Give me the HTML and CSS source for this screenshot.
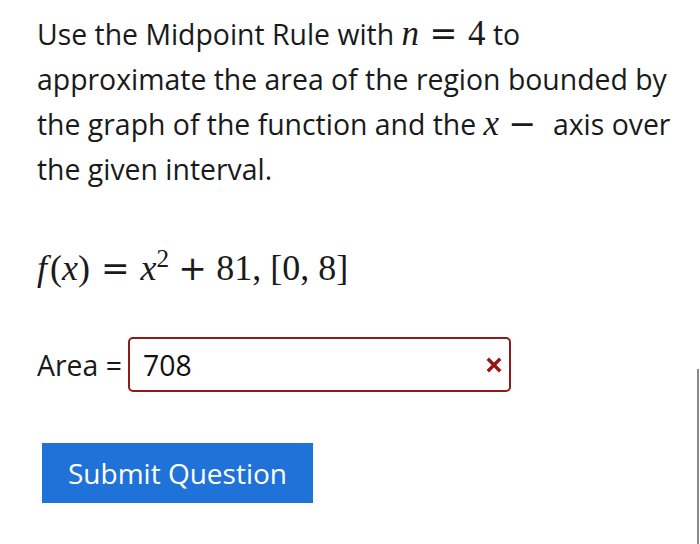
FILE: index.html
```html
<!DOCTYPE html>
<html>
<head>
<meta charset="utf-8">
<link rel="stylesheet" href="styles.css">
</head>
<body>
<div class="page">
  <p class="question">Use the Midpoint Rule with <span class="m"><i>n</i><span class="op">=</span>4</span> to approximate the area of the region bounded by the graph of the function and the <span class="m"><i>x</i><span class="op minus">−</span></span> axis over the given interval.</p>
  <p class="formula"><i class="f">f</i>(<i>x</i>)<span class="op">=</span><i>x</i><sup>2</sup><span class="bin">+</span>81, [0, 8]</p>
  <div class="answer">
    <span class="label">Area =</span>
    <div class="input">
      <span class="value">708</span>
      <svg class="xicon" width="16" height="16" viewBox="0 0 16 16"><path d="M1.8 1.8 L14.2 14.2 M14.2 1.8 L1.8 14.2" stroke="#9a1414" stroke-width="3.4"/></svg>
    </div>
  </div>
  <button class="submit">Submit Question</button>
</div>
<div class="scrollline"></div>
</body>
</html>
```
FILE: styles.css
```css
html, body {
  margin: 0;
  padding: 0;
  background: #fff;
}
body {
  width: 700px;
  height: 544px;
  overflow: hidden;
  position: relative;
  font-family: "Open Sans", sans-serif;
  color: #1a1a1a;
}
.page {
  padding: 12px 0 0 37px;
}
.question {
  margin: 0;
  width: 648px;
  font-size: 28.4px;
  line-height: 45px;
}
.m {
  font-family: "Liberation Serif", serif;
  font-size: 35px;
  line-height: 0;
}
.m i {
  font-style: italic;
}
.op, .bin {
  font-family: "DejaVu Sans", sans-serif;
  font-size: 0.95em;
}
.op {
  margin: 0 0.32em;
}
.minus {
  margin: 0 0.28em;
}
.bin {
  margin: 0 0.27em;
}
.formula {
  margin: 56px 0 0 0;
  font-family: "Liberation Serif", serif;
  font-size: 36px;
  line-height: 40px;
}
.formula .f {
  margin-right: 3px;
}
.formula sup {
  font-size: 0.7em;
  line-height: 0;
  vertical-align: 0.5em;
}
.answer {
  display: flex;
  align-items: center;
  margin-top: 49px;
}
.label {
  font-size: 28.4px;
  width: 91px;
  flex: none;
  white-space: nowrap;
}
.input {
  width: 383px;
  height: 55px;
  box-sizing: border-box;
  border: 2px solid #8e1b1b;
  border-radius: 5px;
  display: flex;
  align-items: center;
  justify-content: space-between;
  padding: 0 7px 0 13px;
}
.value {
  font-size: 28.4px;
  color: #111;
}
.xicon {
  display: block;
}
.submit {
  display: block;
  margin-top: 51px;
  margin-left: 5px;
  width: 271px;
  height: 60px;
  background: #1f73d8;
  border: none;
  color: #fff;
  font-family: "Open Sans", sans-serif;
  font-size: 28px;
  padding: 0;
}
.scrollline {
  position: absolute;
  right: 1px;
  top: 369px;
  width: 2px;
  height: 175px;
  background: #8a8a8a;
}
```
